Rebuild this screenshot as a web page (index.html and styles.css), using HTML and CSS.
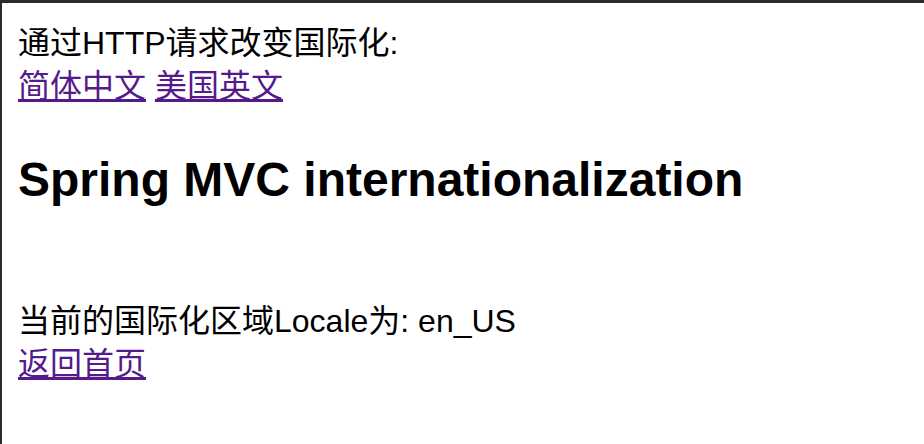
FILE: index.html
```html
<!DOCTYPE html>
<html lang="zh-CN">
<head>
<meta charset="utf-8">
<title>Spring MVC internationalization</title>
<link rel="stylesheet" href="styles.css">
</head>
<body>
<div class="frame">
  <div class="line">通过HTTP请求改变国际化:</div>
  <div class="line"><a class="link" href="#">简体中文</a> <a class="link" href="#">美国英文</a></div>
  <h2 class="title">Spring MVC internationalization</h2>
  <div class="locale">
    <div class="line">当前的国际化区域Locale为: en_US</div>
    <div class="line"><a class="link" href="#">返回首页</a></div>
  </div>
</div>
</body>
</html>
```

FILE: styles.css
```css
html, body {
  margin: 0;
  padding: 0;
  height: 100%;
  background: #ffffff;
}
.frame {
  box-sizing: border-box;
  height: 100%;
  border-top: 3px solid #2b2b2b;
  border-left: 2px solid #2b2b2b;
  padding: 19px 16px 16px 16px;
  font-family: "Liberation Sans", "Noto Sans CJK SC", sans-serif;
  font-size: 32px;
  color: #000000;
}
.line {
  line-height: 43px;
}
.link {
  color: #551a8b;
  text-decoration: underline;
}
.title {
  font-size: 48px;
  font-weight: bold;
  line-height: 56px;
  margin: 44px 0 0 0;
}
.locale {
  margin-top: 92px;
}
```
